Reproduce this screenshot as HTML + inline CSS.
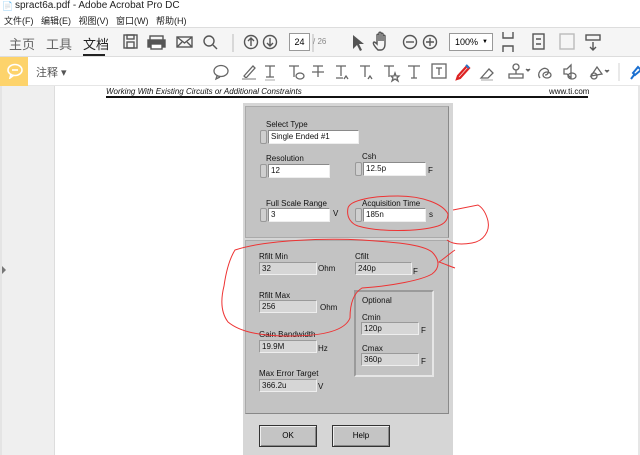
<!DOCTYPE html>
<html><head><meta charset="utf-8"><style>
*{margin:0;padding:0;box-sizing:border-box}
body{width:640px;height:455px;overflow:hidden;background:#fff;font-family:"Liberation Sans","Noto Sans CJK SC",sans-serif;position:relative}
.a{position:absolute}
.t{font-size:11px;color:#222;white-space:nowrap}
.lab{position:absolute;font-size:8px;color:#111;white-space:nowrap;font-family:"Liberation Sans",sans-serif}
.box{position:absolute;background:#fff;border:1px solid #8a8a8a;border-right-color:#eee;border-bottom-color:#eee;font-size:8px;padding-left:2px;line-height:11px;color:#111}
.ind{position:absolute;background:#d6d6d6;border:1px solid #9a9a9a;border-right-color:#eee;border-bottom-color:#eee;font-size:8px;padding-left:2px;line-height:11px;color:#111}
.sp{position:absolute;width:7px;background:#cfcfcf;border:1px solid #999;border-radius:2px}
.unit{position:absolute;font-size:8px;color:#111}
.btn{position:absolute;background:#c4c4c4;border:1px solid #333;box-shadow:inset 1px 1px 0 #eee,inset -1px -1px 0 #888;font-size:8px;text-align:center;line-height:20px}
</style></head><body>
<div class="a" style="left:2px;top:1px;width:10px;height:10px;color:#c00;font-size:9px">📄</div>
<div class="a t" style="left:15px;top:0px;font-size:10px">spract6a.pdf - Adobe Acrobat Pro DC</div>
<div class="a t" style="left:4px;top:14px;font-size:9px">文件(F)&nbsp;&nbsp; 编辑(E)&nbsp;&nbsp; 视图(V)&nbsp;&nbsp; 窗口(W)&nbsp;&nbsp; 帮助(H)</div>
<div class="a" style="left:0;top:27px;width:640px;height:30px;background:#f5f5f5;border-top:1px solid #ddd;border-bottom:1px solid #ddd"></div>
<div class="a t" style="left:9px;top:34px;font-size:13px;color:#666">主页</div>
<div class="a t" style="left:46px;top:34px;font-size:13px;color:#666">工具</div>
<div class="a t" style="left:83px;top:34px;font-size:13px;color:#222">文档</div>
<div class="a" style="left:83px;top:54px;width:22px;height:2px;background:#222"></div>
<svg class="a" style="left:120px;top:30px" width="520" height="26" fill="none" stroke="#555" stroke-width="1.4">
<rect x="4" y="5" width="13" height="13"/><rect x="7" y="5" width="7" height="4"/><rect x="7" y="12" width="7" height="6"/>
<rect x="30" y="6" width="13" height="5"/><rect x="28" y="10" width="17" height="7" fill="#555"/><rect x="31" y="14" width="11" height="5" fill="#fff"/>
<rect x="57" y="7" width="15" height="10"/><path d="M57 7l7.5 6 7.5-6M57 17l5-5M72 17l-5-5"/>
<circle cx="89" cy="11" r="5"/><path d="M93 15l4 4"/>
<path d="M113 4v18" stroke="#ccc"/>
<circle cx="131" cy="12" r="6.5"/><path d="M131 16v-8M128 11l3-3 3 3"/>
<circle cx="150" cy="12" r="6.5"/><path d="M150 8v8M147 13l3 3 3-3"/>
<path d="M193 4v18" stroke="#ccc"/>
<path d="M233 5l0 14 4-4 3 6 2-1-3-6 5 0z" fill="#555" stroke="none"/>
<path d="M258 20c-3-3-6-7-4-8 1 0 3 2 3 2v-9c0-1 2-1 2 0v6-8c0-1 2-1 2 0v8-7c0-1 2-1 2 0v7-5c0-1 2-1 2 0v8c0 4-2 6-4 6z"/>
<circle cx="290" cy="12" r="6.5"/><path d="M286 12h8"/>
<circle cx="310" cy="12" r="6.5"/><path d="M306 12h8M310 8v8"/>
<path d="M383 2v6h10v-6M383 22v-6h10v6" />
<rect x="413" y="4" width="11" height="15"/><path d="M416 9h5M416 14h5" />
<rect x="440" y="4" width="14" height="15" stroke="#bbb"/>
<rect x="466" y="5" width="14" height="5"/><path d="M473 12v8M470 17l3 3 3-3"/>
</svg>
<div class="a" style="left:289px;top:33px;width:21px;height:18px;background:#fff;border:1px solid #999;font-size:9px;text-align:center;line-height:16px">24</div>
<div class="a" style="left:313px;top:37px;font-size:8px;color:#888">/ 26</div>
<div class="a" style="left:449px;top:33px;width:44px;height:18px;background:#fff;border:1px solid #999;font-size:9px;padding-left:5px;line-height:16px">100%<span style="position:absolute;right:4px;font-size:6px">▼</span></div>
<div class="a" style="left:0;top:57px;width:640px;height:29px;background:#fff;border-bottom:1px solid #e6e6e6"></div>
<div class="a" style="left:0;top:57px;width:28px;height:29px;background:#fdd36b"></div>
<svg class="a" style="left:6px;top:63px" width="18" height="16" fill="none" stroke="#fff" stroke-width="1.6"><ellipse cx="9" cy="7" rx="7" ry="5.5"/><path d="M5 11l-1 4 4-3"/><path d="M6 7h6"/></svg>
<div class="a t" style="left:36px;top:64px;font-size:11px;color:#555">注释 ▾</div>
<svg class="a" style="left:210px;top:60px" width="430" height="24" fill="none" stroke="#666" stroke-width="1.3">
<ellipse cx="11" cy="11" rx="7" ry="5.5"/><path d="M7 16l-1 3 4-2"/>
<path d="M34 16l9-10 2 2-9 10z"/><path d="M32 19h14" stroke="#bbb" stroke-width="2"/>
<path d="M55 6h10M60 6v11M56 17h8"/><path d="M55 20h10" stroke="#bbb"/>
<path d="M79 6h10M84 6v11"/><ellipse cx="90" cy="16" rx="4" ry="3"/>
<path d="M103 6h10M108 6v11M102 12h12"/>
<path d="M126 6h10M131 6v10M126 18h7"/><path d="M134 19l2-3 2 3"/>
<path d="M150 6h10M155 6v11"/><path d="M158 19l2-3 2 3"/>
<path d="M174 6h10M179 6v11"/><path d="M185 13l1 3h3l-2 2 1 3-3-2-3 2 1-3-2-2h3z"/>
<path d="M198 6h12M204 6v12M201 18h6"/>
<rect x="222" y="4" width="14" height="14"/><path d="M226 8h6M229 8v7"/>
<path d="M247 19l3-1 9-10-2-2-9 10z" stroke="#d22" stroke-width="2.2"/><path d="M256 5l3 3" stroke="#27c" stroke-width="2"/>
<path d="M271 18l8-9 4 4-5 5z"/><path d="M271 20h12" stroke="#bbb"/>
<circle cx="306" cy="7" r="3"/><path d="M306 10v4M299 14h14v4h-14z"/><path d="M316 9l2 2 2-2" fill="#666"/>
<path d="M330 18c-4-4 2-12 7-9 3 2 1 6-2 6"/><ellipse cx="337" cy="15" rx="4" ry="3"/>
<path d="M354 9h3l4-4v13l-4-4h-3z"/><ellipse cx="362" cy="16" rx="4" ry="3"/>
<path d="M381 16l6-9 5 7z"/><circle cx="384" cy="16" r="3"/><path d="M395 10l2 2 2-2" fill="#666"/>
<path d="M409 3v18" stroke="#ddd"/>
<path d="M423 13l5-6 3 3-6 5zM421 19l3-4" stroke="#1a6fd0" stroke-width="2"/>
</svg>
<div class="a" style="left:0;top:86px;width:55px;height:369px;background:#efefef;border-left:2px solid #e4e4e4;border-right:1px solid #ddd"></div>
<div class="a" style="left:2px;top:266px;width:0;height:0;border-top:4px solid transparent;border-bottom:4px solid transparent;border-left:4px solid #777"></div>
<div class="a" style="left:638px;top:86px;width:2px;height:369px;background:#e6e6e6"></div>
<div class="a" style="left:106px;top:87px;font-size:8px;font-style:italic;color:#111">Working With Existing Circuits or Additional Constraints</div>
<div class="a" style="left:549px;top:87px;font-size:8px;color:#111">www.ti.com</div>
<div class="a" style="left:106px;top:96px;width:482px;height:2px;background:#111"></div>
<div class="a" style="left:243px;top:103px;width:210px;height:352px;background:#d6d6d6"></div>
<div class="a" style="left:245px;top:106px;width:204px;height:132px;background:#c3c3c3;border:1px solid #aaa;border-right-color:#8a8a8a"></div>
<div class="a" style="left:245px;top:240px;width:204px;height:174px;background:#c3c3c3;border:1px solid #aaa;border-right-color:#8a8a8a;border-bottom-color:#888"></div>
<div class="lab" style="left:266px;top:120px">Select Type</div>
<div class="sp" style="left:260px;top:130px;height:14px"></div>
<div class="box" style="left:268px;top:130px;width:91px;height:14px">Single Ended #1</div>
<div class="lab" style="left:266px;top:154px">Resolution</div>
<div class="sp" style="left:260px;top:164px;height:14px"></div>
<div class="box" style="left:268px;top:164px;width:62px;height:14px">12</div>
<div class="lab" style="left:362px;top:152px">Csh</div>
<div class="sp" style="left:355px;top:162px;height:14px"></div>
<div class="box" style="left:363px;top:162px;width:63px;height:14px">12.5p</div>
<div class="unit" style="left:428px;top:166px">F</div>
<div class="lab" style="left:266px;top:199px">Full Scale Range</div>
<div class="sp" style="left:260px;top:208px;height:14px"></div>
<div class="box" style="left:268px;top:208px;width:62px;height:14px">3</div>
<div class="unit" style="left:333px;top:209px">V</div>
<div class="lab" style="left:362px;top:199px">Acquisition Time</div>
<div class="sp" style="left:355px;top:208px;height:14px"></div>
<div class="box" style="left:363px;top:208px;width:63px;height:14px">185n</div>
<div class="unit" style="left:429px;top:210px">s</div>
<div class="lab" style="left:259px;top:252px">Rfilt Min</div>
<div class="ind" style="left:259px;top:262px;width:58px;height:13px">32</div>
<div class="unit" style="left:318px;top:264px">Ohm</div>
<div class="lab" style="left:355px;top:252px">Cfilt</div>
<div class="ind" style="left:355px;top:262px;width:57px;height:13px">240p</div>
<div class="unit" style="left:413px;top:267px">F</div>
<div class="lab" style="left:259px;top:291px">Rfilt Max</div>
<div class="ind" style="left:259px;top:300px;width:58px;height:13px">256</div>
<div class="unit" style="left:320px;top:303px">Ohm</div>
<div class="a" style="left:354px;top:290px;width:80px;height:87px;border:2px solid #9a9a9a;border-right-color:#e6e6e6;border-bottom-color:#e6e6e6"></div>
<div class="lab" style="left:362px;top:296px">Optional</div>
<div class="lab" style="left:362px;top:313px">Cmin</div>
<div class="ind" style="left:361px;top:322px;width:58px;height:13px">120p</div>
<div class="unit" style="left:421px;top:326px">F</div>
<div class="lab" style="left:362px;top:344px">Cmax</div>
<div class="ind" style="left:361px;top:353px;width:58px;height:13px">360p</div>
<div class="unit" style="left:421px;top:357px">F</div>
<div class="lab" style="left:259px;top:330px">Gain Bandwidth</div>
<div class="ind" style="left:259px;top:340px;width:58px;height:13px">19.9M</div>
<div class="unit" style="left:318px;top:344px">Hz</div>
<div class="lab" style="left:259px;top:369px">Max Error Target</div>
<div class="ind" style="left:259px;top:379px;width:58px;height:13px">366.2u</div>
<div class="unit" style="left:318px;top:382px">V</div>
<div class="btn" style="left:259px;top:425px;width:58px;height:22px">OK</div>
<div class="btn" style="left:332px;top:425px;width:58px;height:22px">Help</div>
<svg class="a" style="left:0;top:0" width="640" height="455" fill="none" stroke="#e33" stroke-width="1">
<path d="M448 214c-5-10-25-18-50-18-25 0-48 4-50 12-2 10 4 16 10 18 20 6 60 6 80 0 6-2 10-6 10-12"/>
<path d="M453 210c10-2 20-4 25-5 5 3 8 8 10 16 2 10-4 20-16 22-12 2-20 1-25-3"/>
<path d="M235 250c30-10 90-12 127-10 30 2 60 4 70 12 8 8 8 16 0 22-10 6-40 12-70 14-10 6-12 20-12 30-4 10-20 18-60 18-30 0-50-4-62-14-6-8-8-20-4-36 2-14 6-28 11-36z"/>
<path d="M455 250c-6 4-10 8-16 12 6 2 10 4 16 6"/>
</svg>
</body></html>
